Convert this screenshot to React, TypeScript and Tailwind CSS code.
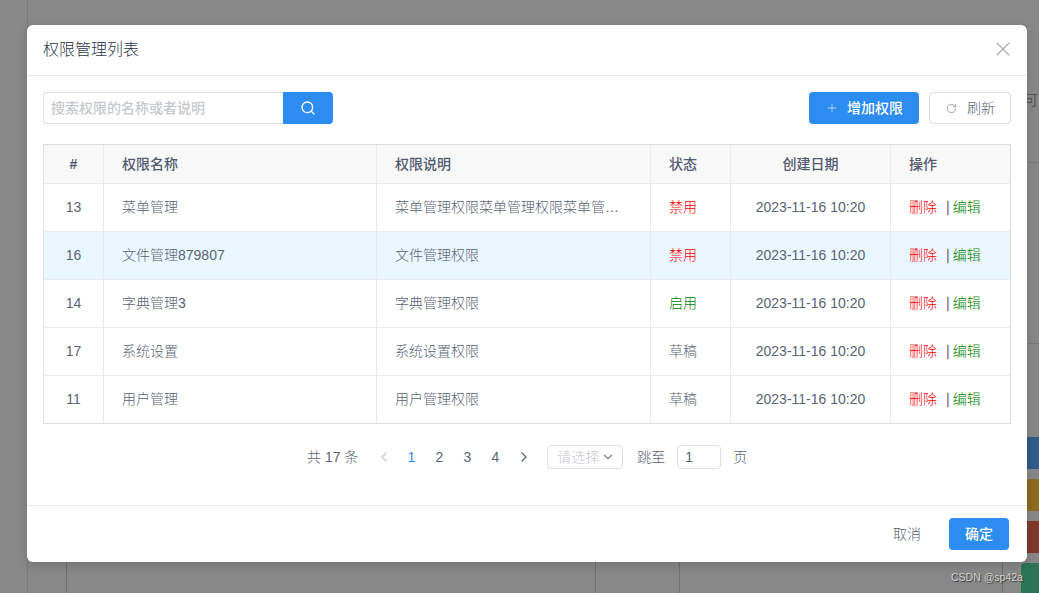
import { Search, Plus, RotateCw, X, ChevronLeft, ChevronRight, ChevronDown } from "lucide-react";

const font = "[font-family:'Liberation_Sans','Noto_Sans_CJK_SC',sans-serif]";

const rows = [
  { id: 13, name: "菜单管理", desc: "菜单管理权限菜单管理权限菜单管理权限菜单管理权限", status: "禁用", color: "text-[#ff0000]", hi: false },
  { id: 16, name: "文件管理879807", desc: "文件管理权限", status: "禁用", color: "text-[#ff0000]", hi: true },
  { id: 14, name: "字典管理3", desc: "字典管理权限", status: "启用", color: "text-[#008000]", hi: false },
  { id: 17, name: "系统设置", desc: "系统设置权限", status: "草稿", color: "text-[#5a6376]", hi: false },
  { id: 11, name: "用户管理", desc: "用户管理权限", status: "草稿", color: "text-[#5a6376]", hi: false },
];

const th = "h-[39px] border-r border-b border-[#e8eaec] px-[18px] text-left text-sm font-medium text-[#515a6e]";
const td = "h-12 border-r border-b border-[#e8eaec] px-[18px] pb-[2px] text-sm font-light text-[#5a6376]";

export default function App() {
  return (
    <div className={`relative h-[593px] w-[1039px] overflow-hidden bg-[#888888] ${font}`}>
      <div className="absolute left-[27px] top-0 h-full w-px bg-[#7b7b7b]" />
      <div className="absolute bottom-0 left-[66px] h-[31px] w-px bg-[#6e6e6e]" />
      <div className="absolute bottom-0 left-[595px] h-[31px] w-px bg-[#6e6e6e]" />
      <div className="absolute bottom-0 left-[679px] h-[31px] w-px bg-[#6e6e6e]" />
      <div className="absolute bottom-0 left-[1002px] h-[31px] w-px bg-[#6e6e6e]" />
      <div className="absolute left-[1027px] top-[437px] h-8 w-3 bg-[#2f5c8a]" />
      <div className="absolute left-[1027px] top-[479px] h-8 w-3 bg-[#8f6a22]" />
      <div className="absolute left-[1027px] top-[521px] h-8 w-3 bg-[#81392a]" />
      <div className="absolute left-[1021px] top-[563px] h-[30px] w-[18px] rounded-tl bg-[#2c7554]" />
      <div className="absolute left-[1024px] top-[90px] text-sm text-[#555555]">可</div>
      <div className="absolute left-[1027px] top-[162px] h-px w-3 bg-[#7b7b7b]" />
      <div className="absolute left-[1027px] top-[343px] h-px w-3 bg-[#7b7b7b]" />
      <div className="absolute left-[951px] top-[571px] text-[10.5px] leading-3 text-[#d4d4d4] [text-shadow:1px_1px_1px_#333]">CSDN @sp42a</div>

      <div className="absolute left-[27px] top-[25px] flex h-[537px] w-[1000px] flex-col rounded-md bg-white shadow-[0_4px_12px_rgba(0,0,0,0.15)]">
        <div className="flex h-[51px] shrink-0 items-center justify-between border-b border-[#e8eaec] pl-4 pr-3">
          <span className="text-base font-light text-[#2b3548]">权限管理列表</span>
          <X size={24} strokeWidth={1.1} className="mb-[2px] text-[#aaaaaa]" />
        </div>

        <div className="flex-1 px-4 pt-4">
          <div className="flex h-8 items-center justify-between">
            <div className="flex h-8 w-[290px]">
              <div className="flex w-[240px] items-center rounded-l border border-r-0 border-[#dcdee2] pl-[7px] text-sm font-medium text-[#c5c8ce]">
                搜索权限的名称或者说明
              </div>
              <button className="flex w-[50px] items-center justify-center rounded-r bg-[#2d8cf0] text-white">
                <Search size={16} strokeWidth={2} />
              </button>
            </div>
            <div className="flex gap-2.5">
              <button className="flex h-8 w-[110px] items-center justify-center gap-2 rounded bg-[#2d8cf0] text-sm font-medium text-white">
                <Plus size={14} strokeWidth={1.3} className="text-[#cfe4fb]" />
                增加权限
              </button>
              <button className="flex h-8 w-[82px] items-center gap-2.5 rounded border border-[#dcdee2] pl-4 text-sm font-light text-[#5a6376]">
                <RotateCw size={11} strokeWidth={1.6} className="text-[#808695]" />
                刷新
              </button>
            </div>
          </div>

          <table className="mt-5 w-[968px] table-fixed border-separate border-spacing-0 border-t border-l border-[#dcdee2]">
            <colgroup>
              <col className="w-[60px]" />
              <col className="w-[273px]" />
              <col className="w-[274px]" />
              <col className="w-20" />
              <col className="w-40" />
              <col />
            </colgroup>
            <thead>
              <tr className="bg-[#f8f8f9]">
                <th className={`${th} !text-center !font-bold`}>#</th>
                <th className={th}>权限名称</th>
                <th className={th}>权限说明</th>
                <th className={th}>状态</th>
                <th className={`${th} !text-center`}>创建日期</th>
                <th className={`${th} !border-r-[#dcdee2]`}>操作</th>
              </tr>
            </thead>
            <tbody>
              {rows.map((r, i) => {
                const last = i === rows.length - 1;
                const bb = last ? "!border-b-[#dcdee2]" : "";
                return (
                  <tr key={r.id} className={r.hi ? "bg-[#ebf7ff]" : "bg-white"}>
                    <td className={`${td} ${bb} text-center`}>{r.id}</td>
                    <td className={`${td} ${bb}`}>{r.name}</td>
                    <td className={`${td} ${bb}`}>
                      <div className="truncate">{r.desc}</div>
                    </td>
                    <td className={`${td} ${bb} ${r.color}`}>{r.status}</td>
                    <td className={`${td} ${bb} text-center`}>2023-11-16 10:20</td>
                    <td className={`${td} ${bb} !border-r-[#dcdee2] whitespace-nowrap`}>
                      <span className="text-[#ff0000]">删除</span>
                      <span className="ml-[9px] mr-[3px]">|</span>
                      <span className="text-[#008000]">编辑</span>
                    </td>
                  </tr>
                );
              })}
            </tbody>
          </table>

          <div className="mt-[21px] flex h-6 items-center text-sm font-light text-[#5a6376]">
            <span className="ml-[264px] whitespace-nowrap">共 17 条</span>
            <ChevronLeft size={16} strokeWidth={1.8} className="ml-[18px] text-[#c5c8ce]" />
            <div className="ml-[5px] flex">
              <span className="w-[28px] text-center text-[#2d8cf0]">1</span>
              <span className="w-[28px] text-center">2</span>
              <span className="w-[28px] text-center">3</span>
              <span className="w-[28px] text-center">4</span>
            </div>
            <ChevronRight size={16} strokeWidth={1.8} className="ml-[7px]" />
            <div className="ml-[15px] flex h-6 w-[76px] items-center gap-[2px] rounded border border-[#dcdee2] pl-[9px] text-[#c5c8ce]">
              <span className="whitespace-nowrap">请选择</span>
              <ChevronDown size={14} strokeWidth={2.2} className="text-[#808695]" />
            </div>
            <span className="ml-[14px] whitespace-nowrap">跳至</span>
            <div className="ml-[12px] flex h-6 w-11 items-center rounded border border-[#dcdee2] pl-[7px]">1</div>
            <span className="ml-3">页</span>
          </div>
        </div>

        <div className="flex h-[57px] shrink-0 items-center justify-end gap-3 border-t border-[#e8eaec] pr-[18px]">
          <button className="h-8 w-[60px] text-sm font-light text-[#5a6376]">取消</button>
          <button className="h-8 w-[60px] rounded bg-[#2d8cf0] text-sm font-medium text-white">确定</button>
        </div>
      </div>
    </div>
  );
}
